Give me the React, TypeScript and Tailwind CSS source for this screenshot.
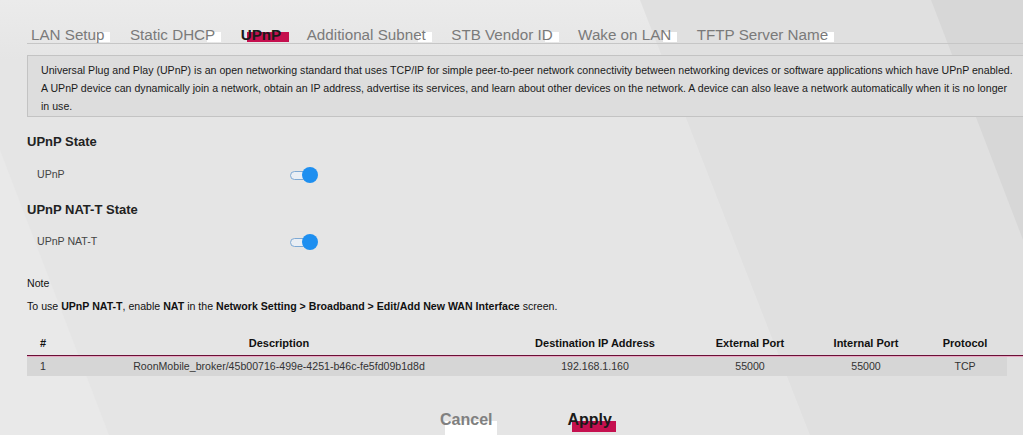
import React from 'react';

const tabs = [
  'LAN Setup',
  'Static DHCP',
  'UPnP',
  'Additional Subnet',
  'STB Vendor ID',
  'Wake on LAN',
  'TFTP Server Name',
];

const cols = ['#', 'Description', 'Destination IP Address', 'External Port', 'Internal Port', 'Protocol'];
const rows = [['1', 'RoonMobile_broker/45b00716-499e-4251-b46c-fe5fd09b1d8d', '192.168.1.160', '55000', '55000', 'TCP']];

function Backdrop() {
  // faint diagonal panels of the router theme
  return (
    <svg className="absolute inset-0" width="1023" height="435" viewBox="0 0 1023 435">
      <defs>
        <linearGradient id="topfade" x1="0" y1="0" x2="0" y2="1">
          <stop offset="0" stopColor="#ebebeb" />
          <stop offset="1" stopColor="#e5e5e5" />
        </linearGradient>
      </defs>
      <rect x="0" y="0" width="1023" height="60" fill="url(#topfade)" />
      <polygon points="0,150 109,435 0,435" fill="#e9e9e9" />
      <polygon points="640,0 1023,0 1023,435 810,435" fill="#e0e0e0" />
      <polygon points="931,0 1023,0 1023,240 977,120" fill="#d7d7d7" />
    </svg>
  );
}

function Toggle() {
  return (
    <div className="relative w-[28px] h-[16px] flex items-center">
      <div className="w-[18px] h-[9px] rounded-full border border-[#7ea9d4] bg-[#e9eef4]" />
      <div className="absolute right-0 top-0 w-[16px] h-[16px] rounded-full bg-[#1e8ff0]" />
    </div>
  );
}

export default function App() {
  return (
    <div
      className="relative w-[1023px] h-[435px] overflow-hidden bg-[#e5e5e5] text-[#222]"
      style={{ fontFamily: '"Liberation Sans", Arial, sans-serif' }}
    >
      <Backdrop />
      <div className="relative pl-[27px]">
        {/* tabs */}
        <div className="flex gap-[25.5px] pl-[4px] pt-[26px] border-b border-[#c6c6c6] text-[15.2px] leading-[17px]">
          {tabs.map((t) => {
            const active = t === 'UPnP';
            return (
              <span key={t} className="relative">
                {active ? (
                  <span className="absolute left-[6px] right-[-8px] top-[6px] h-[10px] bg-[#c5104f]" />
                ) : (
                  <span className="absolute right-[-6px] top-[6px] w-[14px] h-[10px] bg-white" />
                )}
                <span className={active ? 'relative font-bold text-[#1a1a1a]' : 'relative text-[#7a7a7a]'}>{t}</span>
              </span>
            );
          })}
        </div>

        {/* description */}
        <div className="mt-[11px] w-[1010px] border border-[#c3c3c3] bg-[#dddddd] pl-[13px] pt-[5px] pb-[1px] text-[10.6px] leading-[18px] text-[#1a1a1a]">
          <div className="whitespace-nowrap">
            Universal Plug and Play (UPnP) is an open networking standard that uses TCP/IP for simple peer-to-peer network connectivity between networking devices or software applications which have UPnP enabled.
          </div>
          <div className="whitespace-nowrap">
            A UPnP device can dynamically join a network, obtain an IP address, advertise its services, and learn about other devices on the network. A device can also leave a network automatically when it is no longer
          </div>
          <div>in use.</div>
        </div>

        <h2 className="mt-[17px] text-[13px] leading-[16px] font-bold text-[#222]">UPnP State</h2>
        <div className="mt-[15px] h-[20px] pl-[10px] flex items-center">
          <span className="w-[253px] text-[10.6px] text-[#444]">UPnP</span>
          <Toggle />
        </div>

        <h2 className="mt-[17px] text-[13px] leading-[16px] font-bold text-[#222]">UPnP NAT-T State</h2>
        <div className="mt-[14px] h-[20px] pl-[10px] flex items-center">
          <span className="w-[253px] text-[10.6px] text-[#444]">UPnP NAT-T</span>
          <Toggle />
        </div>

        <p className="mt-[24px] text-[10.6px] leading-[14px] text-[#111]">Note</p>
        <p className="mt-[9px] text-[10.6px] leading-[14px] text-[#111]">
          To use <b>UPnP NAT-T</b>, enable <b>NAT</b> in the <b>Network Setting &gt; Broadband &gt; Edit/Add New WAN Interface</b> screen.
        </p>

        {/* port mapping table */}
        <div className="mt-[18px]">
          <div className="border-b border-[#6a1036]">
            <div className="grid grid-cols-[32px_440px_192px_118px_114px_84px] h-[24px] items-center text-[11px] font-bold text-[#111] text-center">
              {cols.map((c) => (
                <span key={c}>{c}</span>
              ))}
            </div>
          </div>
          <div className="h-px bg-[#e7a9c3]" />
          {rows.map((r) => (
            <div
              key={r[0]}
              className="grid grid-cols-[32px_440px_192px_118px_114px_84px] w-[980px] h-[19px] items-center bg-[#d6d6d6] text-[10.6px] text-[#333] text-center"
            >
              {r.map((v, i) => (
                <span key={i}>{v}</span>
              ))}
            </div>
          ))}
        </div>

        {/* actions */}
        <div className="mt-[34px] pl-[413px] flex gap-[75px] text-[16px] leading-[19px] font-bold">
          <span className="relative">
            <span className="absolute left-[5px] right-[-5px] top-[11px] h-[14px] bg-white" />
            <span className="relative text-[#808080]">Cancel</span>
          </span>
          <span className="relative">
            <span className="absolute left-[5px] right-[-4px] top-[11px] h-[11px] bg-[#c5104f]" />
            <span className="relative text-[#1a1a1a]">Apply</span>
          </span>
        </div>
      </div>
    </div>
  );
}
